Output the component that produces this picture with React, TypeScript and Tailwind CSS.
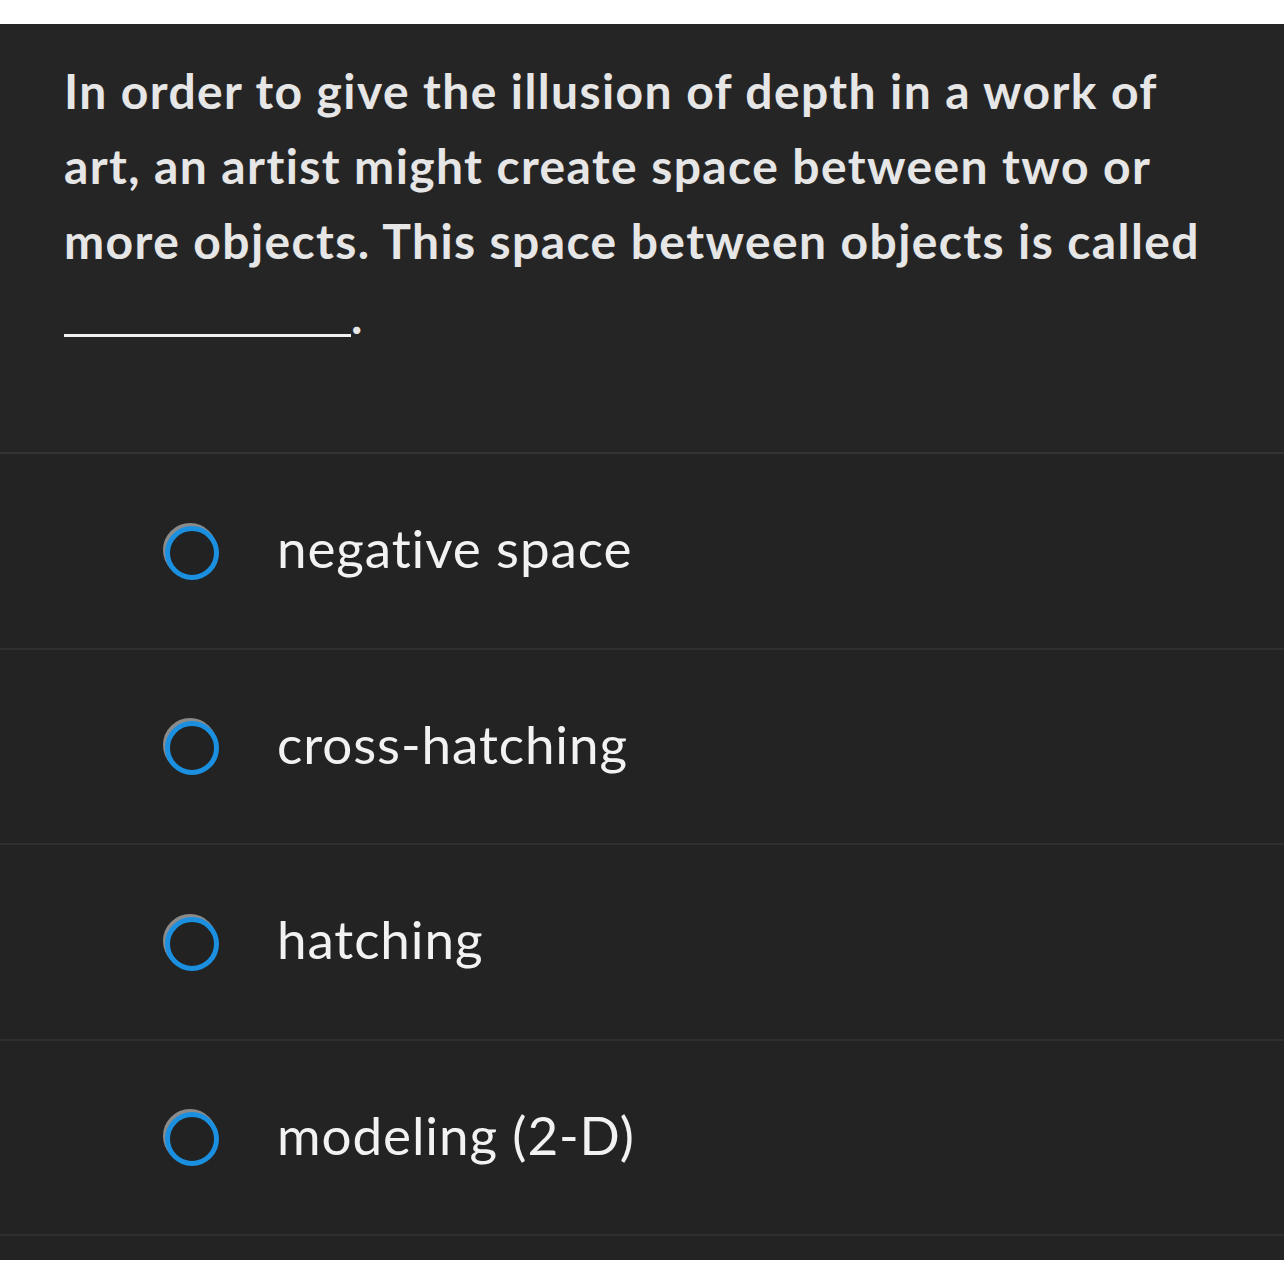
const options = ["negative space", "cross-hatching", "hatching", "modeling (2-D)"];

function Radio() {
  return (
    <span className="relative block w-[54px] h-[54px] shrink-0 mt-[4px]">
      <span className="absolute left-[-2px] top-[-3px] w-[54px] h-[54px] rounded-full border-[5px] border-[#8a8a8a]" />
      <span className="absolute inset-0 rounded-full border-[5px] border-[#1b90e0] bg-[#222222]" />
    </span>
  );
}

export default function App() {
  return (
    <div className="w-[1284px] h-[1284px] bg-white pt-[24px] font-['Lato','Open_Sans',sans-serif]">
      <div className="bg-[#232323] h-[1236px] flex flex-col">
        <div className="h-[430px] bg-[#252525] pl-[64px] pt-[29px] border-b-2 border-[#333333]">
          <p className="text-[#e6e6e6] font-bold text-[48px] leading-[75px] tracking-[1.4px] whitespace-nowrap">
            In order to give the illusion of depth in a work of
            <br />
            art, an artist might create space between two or
            <br />
            more objects. This space between objects is called
            <br />
            <span className="inline-block w-[287px] border-b-[3px] border-[#f2f2f2] h-[22px] align-middle relative top-[4px]" />
            <span>.</span>
          </p>
        </div>
        {options.map((o) => (
          <div key={o} className="h-[195.5px] shrink-0 flex items-center pl-[165px] border-b-2 border-[#2f2f2f]">
            <Radio />
            <span className="ml-[58px] mb-[6px] text-[#f2f2f2] text-[53px] tracking-[0.9px] leading-none">{o}</span>
          </div>
        ))}
      </div>
    </div>
  );
}
